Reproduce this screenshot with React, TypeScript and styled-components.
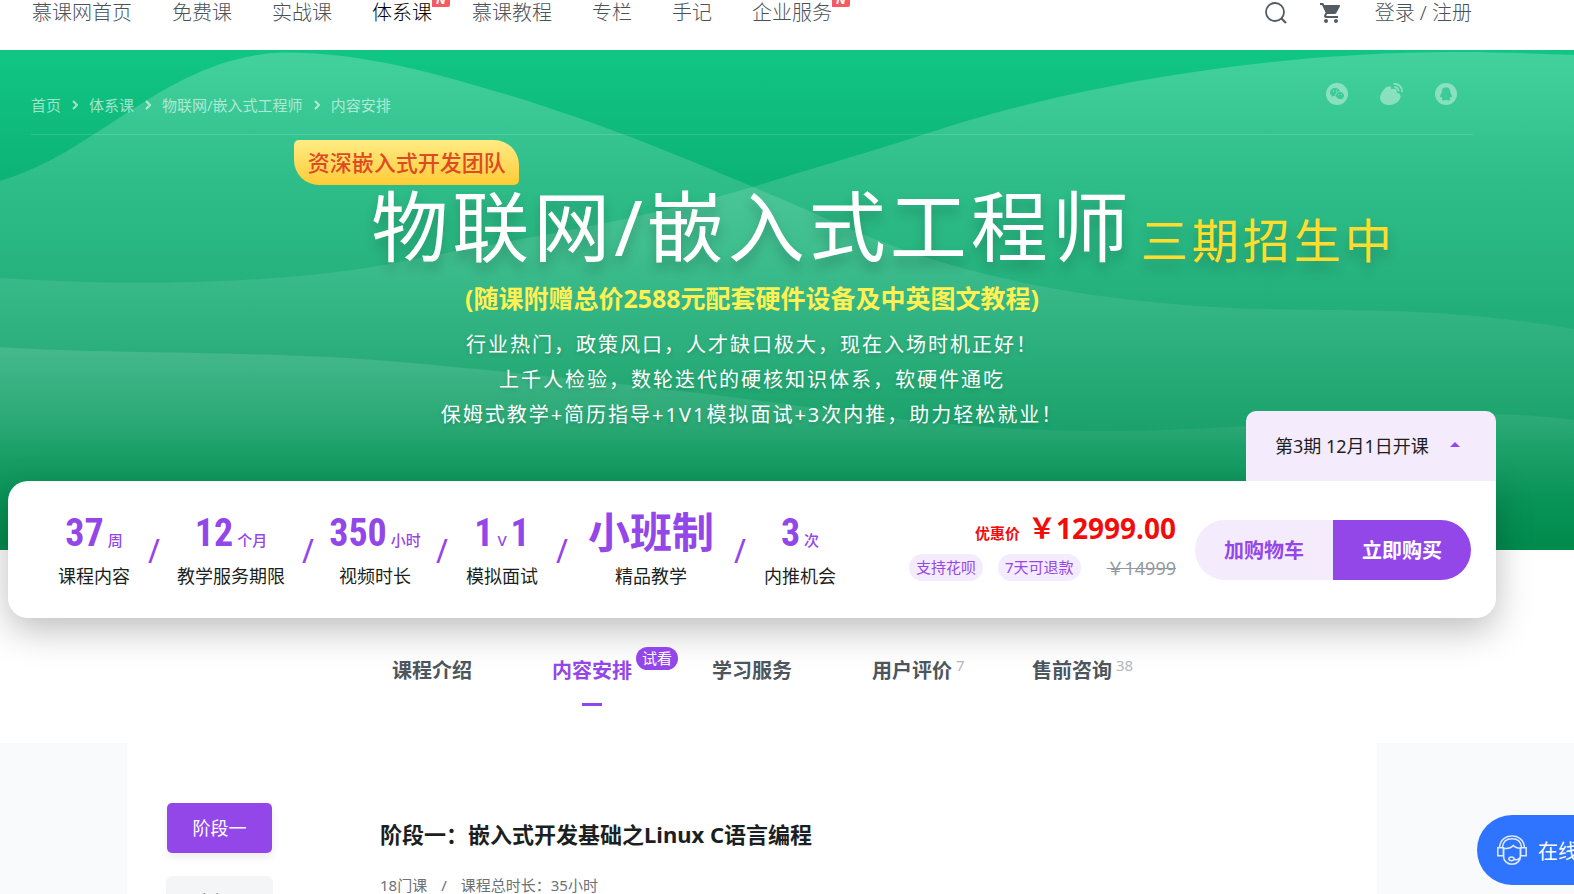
import React from "react";
import styled, { createGlobalStyle, css } from "styled-components";
import { MdShoppingCart } from "react-icons/md";

const purple = "#9447e9";
const lilac = "#f4ebfd";
const ink = "#1c1f21";
const slate = "#545c63";

const GlobalStyle = createGlobalStyle`
  *, *::before, *::after { box-sizing: border-box; }
  body {
    margin: 0;
    background: #fff;
    color: ${ink};
    font-family: "Noto Sans", "Noto Sans CJK SC", sans-serif;
    font-size: 15px;
  }
  a { color: inherit; text-decoration: none; }
  button { font-family: inherit; border: 0; padding: 0; cursor: pointer; }
  h1, h2, p, ul, ol, dl, dd { margin: 0; padding: 0; }
  ul, ol { list-style: none; }
`;

const Page = styled.div`
  height: 100vh;
  overflow: hidden;
  display: flex;
  flex-direction: column;
`;

const track = css`
  margin-right: 70px;
`;

const Header = styled.header`
  ${track}
  height: 50px;
  flex: none;
  padding: 0 32px;
  display: flex;
  justify-content: space-between;
  align-items: flex-start;
  font-size: 20px;
  font-weight: 300;
  line-height: 26px;
  color: #4a5259;
`;

const NavList = styled.ul`
  display: flex;
  gap: 40px;
`;

const NavItem = styled.li<{ $active?: boolean }>`
  position: relative;
  white-space: nowrap;
  color: ${(p) => (p.$active ? "#000" : "inherit")};
`;

const NewFlag = styled.span`
  position: absolute;
  left: 100%;
  top: -9px;
  width: 18px;
  height: 16px;
  border-radius: 4px 0 2px 0;
  background: #f95a61;
  color: #fff;
  font: italic 700 13px/17px "Open Sans", sans-serif;
  text-align: center;
`;

const HeaderTools = styled.div`
  display: flex;
  align-items: center;
  gap: 32px;
  white-space: nowrap;
`;

const ToolButton = styled.button`
  display: flex;
  background: none;
  color: ${slate};
`;

const Hero = styled.section`
  position: relative;
  flex: none;
  height: 500px;
  background: linear-gradient(#11c685 0%, #0cb276 27%, #16a068 75%, #008b4c 100%);
`;

const Waves = styled.svg`
  position: absolute;
  inset: 0;
  width: 100%;
  height: 100%;
`;

const HeroInner = styled.div`
  ${track}
  position: relative;
  padding: 0 31px;
  text-align: center;
  color: #fff;
`;

const HeroBar = styled.div`
  display: flex;
  justify-content: space-between;
  height: 85px;
  padding: 33px 16px 0 0;
  border-bottom: 1px solid rgba(255, 255, 255, 0.14);
`;

const Crumbs = styled.ol`
  display: flex;
  align-items: center;
  gap: 11px;
  height: 44px;
  color: rgba(255, 255, 255, 0.6);
  line-height: 22px;
  li { display: flex; align-items: center; gap: 11px; }
`;

const Share = styled.div`
  display: flex;
  gap: 32px;
  height: 22px;
  color: rgba(255, 255, 255, 0.4);
`;

const TitleLine = styled.div`
  display: flex;
  justify-content: center;
  padding-top: 47px;
`;

const TitleBox = styled.div`
  position: relative;
  line-height: 90px;
  letter-spacing: 4px;
  white-space: nowrap;
  text-shadow: 0 8px 12px rgba(0, 0, 0, 0.2);
`;

const Title = styled.h1`
  font-size: 77px;
  font-weight: 400;
`;

const Intake = styled.span`
  position: absolute;
  left: 100%;
  bottom: 0;
  padding-left: 8px;
  font-size: 47px;
  line-height: 64px;
  color: #ffdc2e;
`;

const TeamTag = styled.span`
  position: absolute;
  right: calc(100% - 148px);
  top: -42px;
  width: 225px;
  height: 45px;
  border-radius: 5px 25px 5px 25px;
  background: linear-gradient(#ffec85, #ffcb36);
  color: #dd4a24;
  font-size: 22px;
  font-weight: 500;
  line-height: 45px;
  letter-spacing: 0;
  text-shadow: none;
  text-align: center;
`;

const Gift = styled.p`
  margin-top: 8px;
  font-size: 25px;
  font-weight: 700;
  line-height: 36px;
  color: #fff054;
`;

const Pitch = styled.p`
  margin-top: 11px;
  font-size: 20px;
  line-height: 35px;
  letter-spacing: 2px;
  text-shadow: 0 2px 4px rgba(0, 0, 0, 0.15);
`;

const CardWrap = styled.section`
  ${track}
  position: relative;
  flex: none;
  margin-top: -139px;
  padding: 0 8px;
  display: flex;
  flex-direction: column;
  align-items: stretch;
`;

const TermButton = styled.button`
  position: relative;
  z-index: 1;
  align-self: flex-end;
  width: 250px;
  height: 70px;
  padding: 0 36px 3px 29px;
  border-radius: 10px 10px 0 0;
  background: ${lilac};
  color: ${ink};
  font-size: 18px;
  display: flex;
  align-items: center;
  justify-content: space-between;
`;

const Card = styled.div`
  min-height: 137px;
  padding: 0 25px 0 50px;
  border-radius: 20px 0 20px 20px;
  background: #fff;
  box-shadow: 0 12px 36px rgba(0, 0, 0, 0.26);
  display: flex;
  align-items: center;
`;

const Stats = styled.dl`
  display: flex;
  flex: 1;
  padding-bottom: 4px;
`;

const Stat = styled.div<{ $width: number }>`
  display: flex;
  flex-direction: column-reverse;
  align-items: center;
  width: ${(p) => p.$width}px;
  white-space: nowrap;
`;

const StatLabel = styled.dt`
  font-size: 18px;
  line-height: 28px;
`;

const StatValue = styled.dd`
  height: 56px;
  display: flex;
  align-items: baseline;
  gap: 4px;
  color: ${purple};
  font-size: 15px;
  line-height: 54px;
  font-weight: 500;
`;

const Figure = styled.b`
  font: 700 38px/54px "Liberation Sans Narrow", "Roboto Condensed", sans-serif;
`;

const Word = styled.b`
  font-size: 42px;
  line-height: 52px;
`;

const Slash = styled.div`
  width: 48px;
  padding-top: 18px;
  text-align: center;
  font-size: 32px;
  line-height: 54px;
  color: ${purple};
`;

const Offer = styled.div`
  display: flex;
  flex-direction: column;
  align-items: flex-end;
  margin-right: 19px;
  padding-bottom: 11px;
  white-space: nowrap;
`;

const Price = styled.p`
  display: flex;
  align-items: baseline;
  gap: 8px;
  line-height: 42px;
  font-weight: 700;
  color: #f20d0d;
`;

const Amount = styled.strong`
  font-size: 28px;
  font-weight: 700;
`;

const Perks = styled.div`
  display: flex;
  align-items: center;
  gap: 15px;
`;

const Perk = styled.span`
  padding: 0 7px;
  border-radius: 14px;
  background: ${lilac};
  color: ${purple};
  line-height: 27px;
`;

const OldPrice = styled.del`
  margin-left: 11px;
  font-size: 18px;
  line-height: 24px;
  color: #93999f;
`;

const BuyButton = styled.button<{ $primary?: boolean }>`
  width: 138px;
  height: 60px;
  font-size: 20px;
  font-weight: 700;
  border-radius: ${(p) => (p.$primary ? "0 30px 30px 0" : "30px 0 0 30px")};
  background: ${(p) => (p.$primary ? purple : lilac)};
  color: ${(p) => (p.$primary ? "#fff" : purple)};
`;

const TabBar = styled.nav`
  ${track}
  flex: none;
  display: flex;
  justify-content: center;
  gap: 80px;
  height: 125px;
  padding-top: 38px;
`;

const Tab = styled.a<{ $active?: boolean }>`
  position: relative;
  display: flex;
  flex-direction: column;
  align-items: center;
  gap: 17px;
  height: 50px;
  font-size: 20px;
  font-weight: 700;
  line-height: 30px;
  color: ${(p) => (p.$active ? purple : "#4d555d")};
  &::after {
    content: "";
    width: 20px;
    height: 3px;
    background: ${(p) => (p.$active ? purple : "transparent")};
  }
`;

const TabCount = styled.sup`
  position: absolute;
  left: 100%;
  top: 0;
  padding-left: 4px;
  font-size: 15px;
  font-weight: 400;
  line-height: 18px;
  color: #b2b8bd;
`;

const TrialBadge = styled.span`
  position: absolute;
  left: 100%;
  top: -9px;
  width: 42px;
  height: 23px;
  margin-left: 4px;
  border-radius: 12px;
  background: ${purple};
  color: #fff;
  font-size: 15px;
  font-weight: 400;
  line-height: 23px;
  text-align: center;
`;

const Body = styled.main`
  flex: 1;
  min-height: 0;
  background: #f8fafc;
`;

const Sheet = styled.div`
  ${track}
  height: 100%;
  padding: 0 127px;
`;

const Paper = styled.div`
  height: 100%;
  padding: 60px 40px 0;
  background: #fff;
  display: flex;
  gap: 108px;
`;

const Stages = styled.ul`
  flex: none;
  width: 105px;
  display: flex;
  flex-direction: column;
  gap: 24px;
`;

const StageButton = styled.button<{ $active?: boolean }>`
  width: 100%;
  height: 50px;
  border-radius: 5px;
  font-size: 18px;
  line-height: 26px;
  background: ${(p) => (p.$active ? purple : "#f3f5f6")};
  color: ${(p) => (p.$active ? "#fff" : slate)};
  box-shadow: ${(p) => (p.$active ? "0 4px 8px rgba(7, 17, 27, 0.08)" : "0 0 0 1px #f3f5f6")};
`;

const StageTitle = styled.h2`
  margin-top: 13px;
  font-size: 22px;
  line-height: 36px;
`;

const StageMeta = styled.p`
  display: flex;
  gap: 14px;
  margin-top: 22px;
  line-height: 22px;
  color: #6d7278;
`;

const ChatButton = styled.button`
  position: fixed;
  left: calc(100% - 97px);
  bottom: 9px;
  width: 160px;
  height: 70px;
  padding-left: 20px;
  border-radius: 35px 0 0 35px;
  background: #2e74ff;
  color: #fff;
  font-size: 20px;
  white-space: nowrap;
  display: flex;
  align-items: center;
  gap: 11px;
`;

const Chevron = () => (
  <svg width="6" height="10" viewBox="0 0 6 10" fill="none" stroke="currentColor" strokeWidth="2" aria-hidden="true">
    <path d="M1 1l4 4-4 4" />
  </svg>
);

const WechatIcon = () => (
  <svg width="22" height="22" viewBox="0 0 22 22" aria-hidden="true">
    <mask id="wechat">
      <circle cx="11" cy="11" r="11" fill="#fff" />
      <path d="M9 5c-3 0-5 1.900-5 4.200 0 1.400.7 2.500 1.800 3.300L5.400 14l1.800-.9c.6.2 1.200.2 1.800.2h.4c-.1-.4-.2-.7-.2-1 0-2.200 2-3.900 4.500-3.900h.2C13.500 6.400 11.500 5 9 5z" fill="#000" />
      <path d="M14 9.100c-2.400 0-4.100 1.600-4.100 3.500s1.700 3.500 4.100 3.500c.5 0 1-.1 1.400-.2l1.500.7-.3-1.300c.9-.7 1.400-1.600 1.400-2.700 0-1.900-1.700-3.500-4-3.500z" fill="#000" />
      <g fill="#fff">
        <circle cx="7.300" cy="8" r=".7" /><circle cx="10.600" cy="8" r=".7" />
        <circle cx="12.700" cy="11.600" r=".6" /><circle cx="15.300" cy="11.600" r=".6" />
      </g>
    </mask>
    <rect width="22" height="22" fill="currentColor" mask="url(#wechat)" />
  </svg>
);

const WeiboIcon = () => (
  <svg width="23" height="22" viewBox="0 0 23 22" aria-hidden="true">
    <path fill="currentColor" d="M10.500 3.400c1 .5.900 1.900.5 3 .9-.2 2.800-.8 4.300-.4 1.500.5 1.800 1.800 1.200 3.600 1.500.4 4.100 1.200 4.100 4 0 4-5 8.400-11 8.400-5.600 0-9.500-2.800-9.500-7.300C.1 9.600 6.600 2.300 10.500 3.400z" />
    <path fill="none" stroke="currentColor" strokeWidth="1.800" d="M13.500.9c4.700-.8 9 3 8.500 8.300M14.200 4.200c2.700-.4 4.600 1.800 4.200 4.300" />
  </svg>
);

const QqIcon = () => (
  <svg width="22" height="22" viewBox="0 0 22 22" aria-hidden="true">
    <mask id="qq">
      <circle cx="11" cy="11" r="11" fill="#fff" />
      <path d="M11 4.200c-2.700 0-4.300 2-4.300 4.500v1.100c-.9 1.200-1.700 2.800-1.500 4.300.1.700.7.500 1.300-.4.200.8.600 1.500 1.200 2-.8.400-1 .9-.8 1.300.4.700 3.300.6 4.100-.2.800.8 3.700.9 4.100.2.200-.4 0-.9-.8-1.300.6-.5 1-1.200 1.200-2 .6.900 1.200 1.100 1.300.4.200-1.500-.6-3.100-1.500-4.300V8.700c0-2.500-1.600-4.500-4.300-4.500z" fill="#000" />
    </mask>
    <rect width="22" height="22" fill="currentColor" mask="url(#qq)" />
  </svg>
);

const SearchIcon = () => (
  <svg width="22" height="22" viewBox="0 0 22 22" fill="none" stroke="currentColor" strokeWidth="1.800" aria-hidden="true">
    <circle cx="10" cy="10" r="9" />
    <path d="M16 16l5 5" strokeWidth="2.200" />
  </svg>
);

const HeadsetIcon = () => (
  <svg width="30" height="30" viewBox="0 0 30 30" fill="none" stroke="#dfe9ff" strokeWidth="1.500" aria-hidden="true">
    <path d="M2.500 12.500C3 5.500 8 .9 15 .9s12 4.600 12.500 11.600M5.300 12.500C5.900 7 9.500 3.700 15 3.700s9.100 3.300 9.700 8.800" />
    <path d="M6.500 12.700H.8v8h5.700zM23.500 12.700h5.700v8h-5.700z" />
    <path d="M6.500 13v8c0 4.800 3.500 8.200 8.500 8.200s8.500-3.400 8.500-8.200v-8" />
    <path d="M6.500 13.200c3 .6 7.500-.2 9.800-2.700 1.400 1.700 3.900 2.700 7.200 2.700" />
    <ellipse cx="14.500" cy="23.800" rx="2.600" ry="1.900" />
    <path d="M17 24.200c2 .8 4.700.3 6-1.700" />
  </svg>
);

const HeroWaves = () => (
  <Waves viewBox="0 0 1574 500" preserveAspectRatio="none" aria-hidden="true">
    <defs>
      <linearGradient id="fadeWide" gradientUnits="userSpaceOnUse" x1="0" y1="0" x2="0" y2="400">
        <stop offset="0" stopColor="#fff" stopOpacity=".21" />
        <stop offset="1" stopColor="#fff" stopOpacity="0" />
      </linearGradient>
      <linearGradient id="fadeLow" gradientUnits="userSpaceOnUse" x1="0" y1="290" x2="0" y2="450">
        <stop offset="0" stopColor="#fff" stopOpacity=".13" />
        <stop offset="1" stopColor="#fff" stopOpacity="0" />
      </linearGradient>
    </defs>
    <path fill="url(#fadeWide)" d="M0 131C100 102 165 8 282 2.500C370 2 450 28 525 50C615 79 685 108 753 137C815 163 850 180 880 191C1000 238 1150 260 1322 260C1420 260 1500 266 1574 279V500H0z" />
    <path fill="url(#fadeWide)" d="M0 228C150 238 300 232 400 212C530 186 620 175 753 137C830 113 870 102 925 84C1050 42 1250 2 1455 2C1500 2 1540 4 1574 5V500H0z" />
    <path fill="url(#fadeLow)" d="M0 297C120 305 270 300 400 312C580 328 720 345 800 356C900 370 990 381 1101 381C1250 381 1360 364 1480 364C1520 364 1550 367 1574 370V500H0z" />
  </Waves>
);

type NavEntry = { label: string; active?: boolean; flagged?: boolean };
const navEntries: NavEntry[] = [
  { label: "慕课网首页" },
  { label: "免费课" },
  { label: "实战课" },
  { label: "体系课", active: true, flagged: true },
  { label: "慕课教程" },
  { label: "专栏" },
  { label: "手记" },
  { label: "企业服务", flagged: true },
];

const crumbs = ["首页", "体系课", "物联网/嵌入式工程师", "内容安排"];

const stats: { label: string; width: number; value: React.ReactNode }[] = [
  { label: "课程内容", width: 72, value: <><Figure>37</Figure>周</> },
  { label: "教学服务期限", width: 106, value: <><Figure>12</Figure>个月</> },
  { label: "视频时长", width: 86, value: <><Figure>350</Figure>小时</> },
  { label: "模拟面试", width: 72, value: <><Figure>1</Figure>V<Figure>1</Figure></> },
  { label: "精品教学", width: 130, value: <Word>小班制</Word> },
  { label: "内推机会", width: 72, value: <><Figure>3</Figure>次</> },
];

export default function App() {
  return (
    <Page>
      <GlobalStyle />
      <Header>
        <nav>
          <NavList>
            {navEntries.map((n) => (
              <NavItem key={n.label} $active={n.active}>
                <a href="#">{n.label}</a>
                {n.flagged && <NewFlag>N</NewFlag>}
              </NavItem>
            ))}
          </NavList>
        </nav>
        <HeaderTools>
          <ToolButton aria-label="搜索"><SearchIcon /></ToolButton>
          <ToolButton aria-label="购物车"><MdShoppingCart size={24} /></ToolButton>
          <a href="#">登录 / 注册</a>
        </HeaderTools>
      </Header>

      <Hero>
        <HeroWaves />
        <HeroInner>
          <HeroBar>
            <Crumbs>
              {crumbs.map((c, i) => (
                <li key={c}>
                  {i > 0 && <Chevron />}
                  <a href="#">{c}</a>
                </li>
              ))}
            </Crumbs>
            <Share>
              <a href="#" aria-label="微信"><WechatIcon /></a>
              <a href="#" aria-label="微博"><WeiboIcon /></a>
              <a href="#" aria-label="QQ"><QqIcon /></a>
            </Share>
          </HeroBar>
          <TitleLine>
            <TitleBox>
              <TeamTag>资深嵌入式开发团队</TeamTag>
              <Title>物联网/嵌入式工程师</Title>
              <Intake>三期招生中</Intake>
            </TitleBox>
          </TitleLine>
          <Gift>(随课附赠总价2588元配套硬件设备及中英图文教程)</Gift>
          <Pitch>
            行业热门，政策风口，人才缺口极大，现在入场时机正好！<br />
            上千人检验，数轮迭代的硬核知识体系，软硬件通吃<br />
            保姆式教学+简历指导+1V1模拟面试+3次内推，助力轻松就业！
          </Pitch>
        </HeroInner>
      </Hero>

      <CardWrap>
        <TermButton>
          第3期 12月1日开课
          <svg width="10" height="5" viewBox="0 0 10 5" aria-hidden="true">
            <path d="M5 0l5 5H0z" fill={purple} />
          </svg>
        </TermButton>
        <Card>
          <Stats>
            {stats.map((s, i) => (
              <React.Fragment key={s.label}>
                {i > 0 && <Slash aria-hidden="true">/</Slash>}
                <Stat $width={s.width}>
                  <StatLabel>{s.label}</StatLabel>
                  <StatValue>{s.value}</StatValue>
                </Stat>
              </React.Fragment>
            ))}
          </Stats>
          <Offer>
            <Price>优惠价<Amount>￥12999.00</Amount></Price>
            <Perks>
              <Perk>支持花呗</Perk>
              <Perk>7天可退款</Perk>
              <OldPrice>￥14999</OldPrice>
            </Perks>
          </Offer>
          <BuyButton>加购物车</BuyButton>
          <BuyButton $primary>立即购买</BuyButton>
        </Card>
      </CardWrap>

      <TabBar>
        <Tab href="#">课程介绍</Tab>
        <Tab href="#" $active>内容安排<TrialBadge>试看</TrialBadge></Tab>
        <Tab href="#">学习服务</Tab>
        <Tab href="#">用户评价<TabCount>7</TabCount></Tab>
        <Tab href="#">售前咨询<TabCount>38</TabCount></Tab>
      </TabBar>

      <Body>
        <Sheet>
          <Paper>
            <Stages>
              <li><StageButton $active>阶段一</StageButton></li>
              <li><StageButton>阶段二</StageButton></li>
            </Stages>
            <div>
              <StageTitle>阶段一：嵌入式开发基础之Linux C语言编程</StageTitle>
              <StageMeta>
                <span>18门课</span>
                <span>/</span>
                <span>课程总时长：35小时</span>
              </StageMeta>
            </div>
          </Paper>
        </Sheet>
      </Body>

      <ChatButton><HeadsetIcon />在线咨询</ChatButton>
    </Page>
  );
}
